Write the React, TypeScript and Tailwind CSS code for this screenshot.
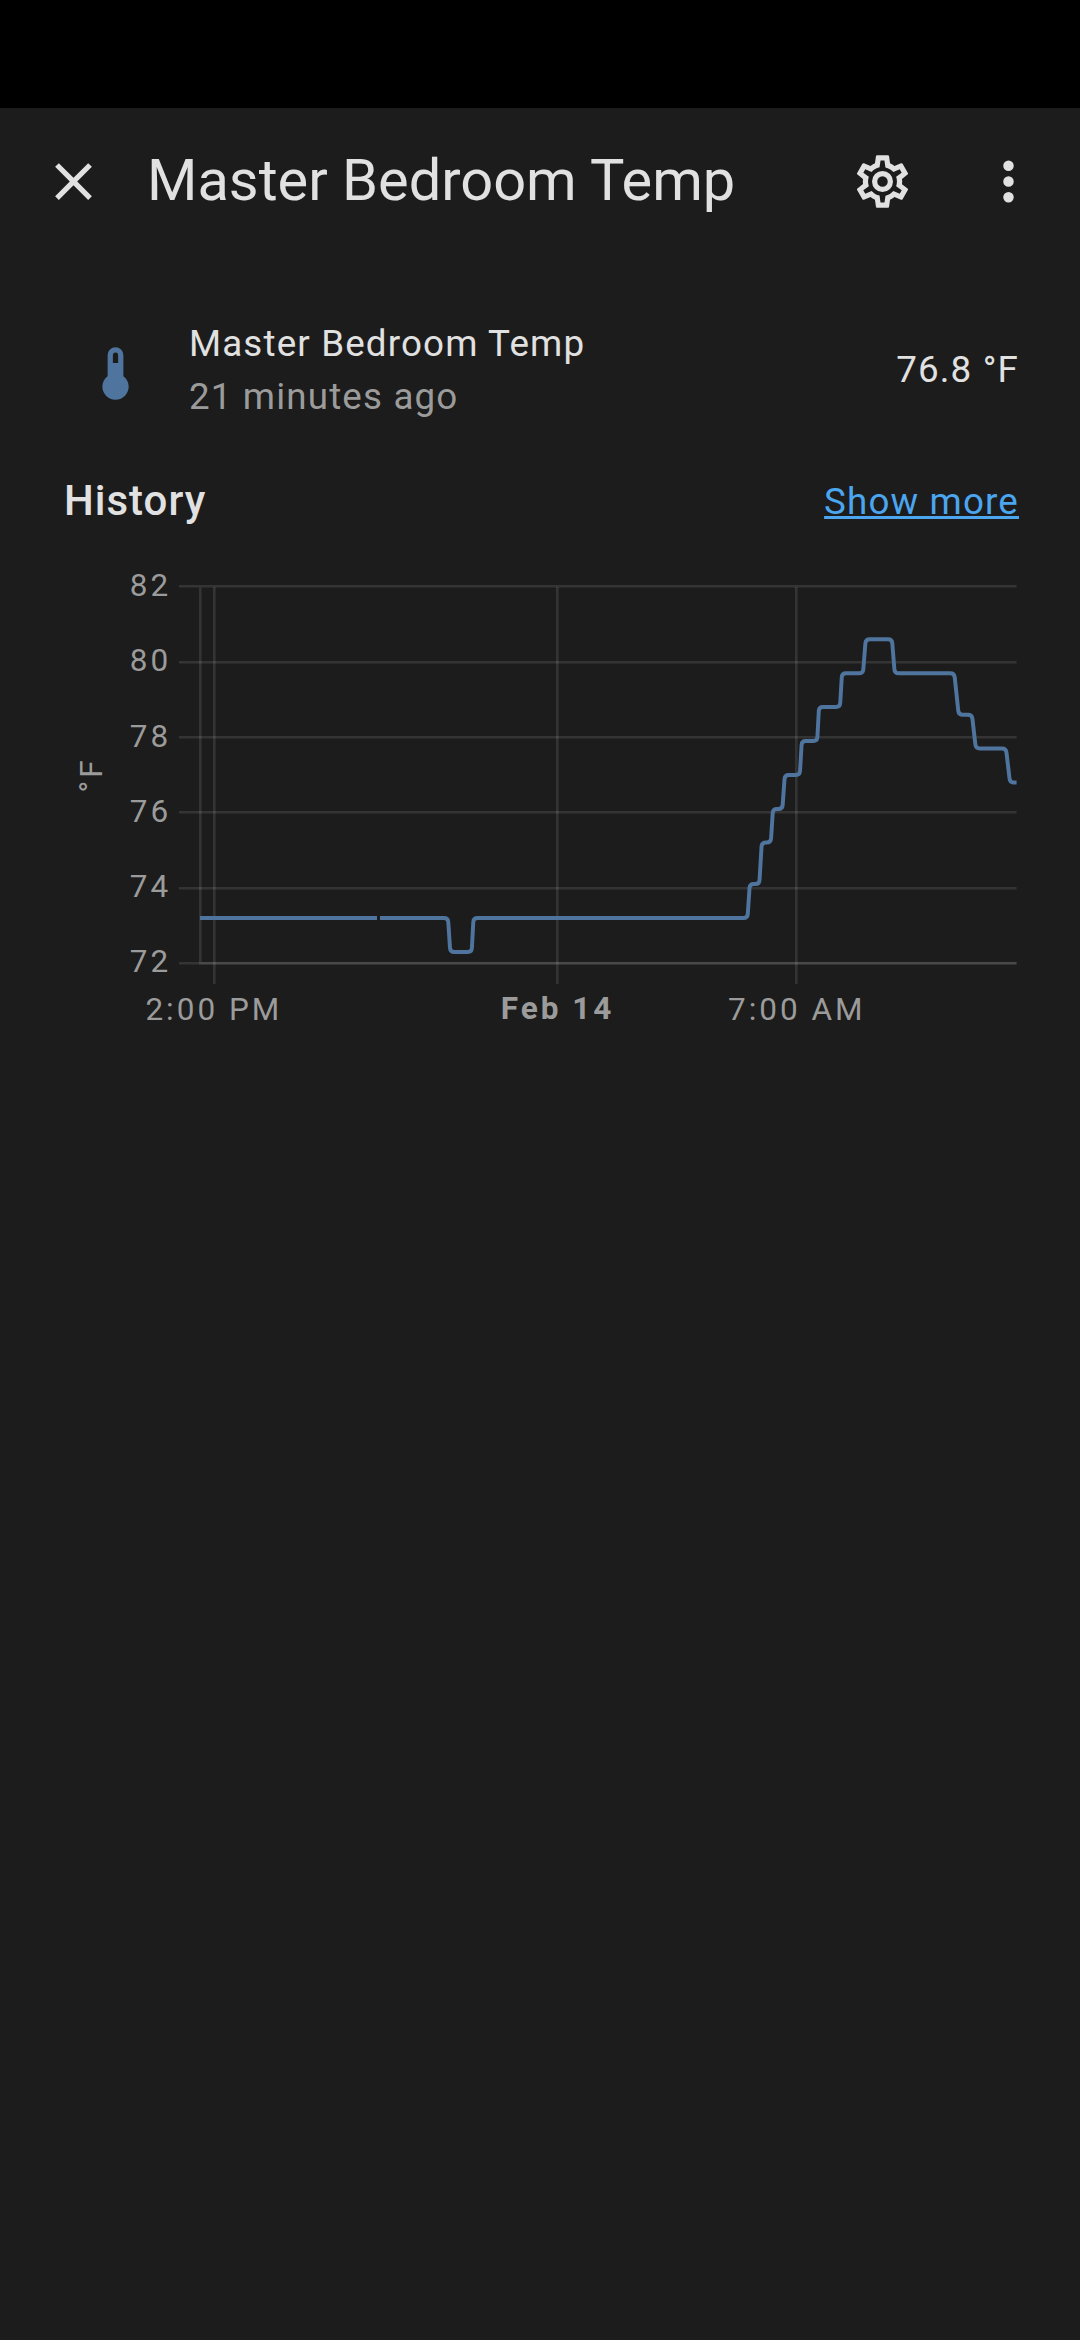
type Point = [number, number];

const ICONS = {
  close:
    "M19,6.41L17.59,5L12,10.59L6.41,5L5,6.41L10.59,12L5,17.59L6.41,19L12,13.41L17.59,19L19,17.59L13.41,12L19,6.41Z",
  cog: "M12,8A4,4 0 0,1 16,12A4,4 0 0,1 12,16A4,4 0 0,1 8,12A4,4 0 0,1 12,8M12,10A2,2 0 0,0 10,12A2,2 0 0,0 12,14A2,2 0 0,0 14,12A2,2 0 0,0 12,10M10,22C9.75,22 9.54,21.82 9.5,21.58L9.13,18.93C8.5,18.68 7.96,18.34 7.44,17.94L4.95,18.95C4.73,19.03 4.46,18.95 4.34,18.73L2.34,15.27C2.21,15.05 2.27,14.78 2.46,14.63L4.57,12.97L4.5,12L4.57,11L2.46,9.37C2.27,9.22 2.21,8.95 2.34,8.73L4.34,5.27C4.46,5.05 4.73,4.96 4.95,5.05L7.44,6.05C7.96,5.66 8.5,5.32 9.13,5.07L9.5,2.42C9.54,2.18 9.75,2 10,2H14C14.25,2 14.46,2.18 14.5,2.42L14.87,5.07C15.5,5.32 16.04,5.66 16.56,6.05L19.05,5.05C19.27,4.96 19.54,5.05 19.66,5.27L21.66,8.73C21.79,8.95 21.73,9.22 21.54,9.37L19.43,11L19.5,12L19.43,13L21.54,14.63C21.73,14.78 21.79,15.05 21.66,15.27L19.66,18.73C19.54,18.95 19.27,19.04 19.05,18.95L16.56,17.95C16.04,18.34 15.5,18.68 14.87,18.93L14.5,21.58C14.46,21.82 14.25,22 14,22H10M11.25,4L10.88,6.61C9.68,6.86 8.62,7.5 7.85,8.39L5.44,7.35L4.69,8.65L6.8,10.2C6.4,11.37 6.4,12.64 6.8,13.8L4.68,15.36L5.43,16.66L7.86,15.62C8.63,16.5 9.68,17.14 10.87,17.38L11.24,20H12.76L13.13,17.39C14.32,17.14 15.37,16.5 16.14,15.62L18.57,16.66L19.32,15.36L17.2,13.81C17.6,12.64 17.6,11.37 17.2,10.2L19.31,8.65L18.56,7.35L16.15,8.39C15.38,7.5 14.32,6.86 13.12,6.62L12.75,4H11.25Z",
  dots: "M12,16A2,2 0 0,1 14,18A2,2 0 0,1 12,20A2,2 0 0,1 10,18A2,2 0 0,1 12,16M12,10A2,2 0 0,1 14,12A2,2 0 0,1 12,14A2,2 0 0,1 10,12A2,2 0 0,1 12,10M12,4A2,2 0 0,1 14,6A2,2 0 0,1 12,8A2,2 0 0,1 10,6A2,2 0 0,1 12,4Z",
  thermometer:
    "M15 13V5A3 3 0 0 0 9 5V13A5 5 0 1 0 15 13M12 4A1 1 0 0 1 13 5V8H11V5A1 1 0 0 1 12 4Z",
};

function Icon({ path, className }: { path: string; className?: string }) {
  return (
    <svg viewBox="0 0 24 24" fill="currentColor" className={`size-[63px] shrink-0 ${className ?? ""}`}>
      <path d={path} />
    </svg>
  );
}

// Chart coordinates start 560px below the top of the screen.
const TOP = 560;
const yTicks = [
  { label: "82", y: 586.3, base: 596 },
  { label: "80", y: 662.3, base: 671 },
  { label: "78", y: 737.3, base: 747 },
  { label: "76", y: 812.3, base: 822 },
  { label: "74", y: 888.3, base: 897 },
  { label: "72", y: 963.3, base: 972 },
];
const xTicks = [214.3, 557.3, 796.3];

const before: Point[] = [[200, 918], [377, 918]];
const after: Point[] = [
  [380, 918], [448, 918], [450.3, 952], [471.7, 952], [473.5, 918],
  [747.5, 918], [749.8, 884], [759.3, 884], [761.8, 842.5], [770.8, 842.5],
  [773, 809], [782.4, 809], [784.8, 775], [799.8, 775], [801.8, 741],
  [817.2, 741], [819, 707], [840, 707], [842, 673.3], [863, 673.3],
  [865.7, 639.3], [892, 639.3], [894.7, 673.3], [954.3, 673.3], [958.7, 714.7],
  [972, 714.7], [975.8, 748.5], [1006, 748.5], [1010, 782.5], [1016.6, 782.5],
];

// Builds a polyline path whose corners are softened with short quadratic curves.
function roundedPath(points: Point[], radius: number) {
  const toward = (a: Point, b: Point): Point => {
    const len = Math.hypot(b[0] - a[0], b[1] - a[1]);
    const t = Math.min(radius, len / 2) / len;
    return [a[0] + (b[0] - a[0]) * t, a[1] + (b[1] - a[1]) * t];
  };
  let d = `M${points[0][0]},${points[0][1]}`;
  for (let i = 1; i < points.length - 1; i++) {
    const p = toward(points[i], points[i - 1]);
    const q = toward(points[i], points[i + 1]);
    d += `L${p[0]},${p[1]}Q${points[i][0]},${points[i][1]} ${q[0]},${q[1]}`;
  }
  const last = points[points.length - 1];
  return `${d}L${last[0]},${last[1]}`;
}

function HistoryChart() {
  return (
    <svg
      viewBox={`0 ${TOP} 1080 480`}
      className="block h-[480px] w-[1080px] fill-[#9b9b9b] text-[31.5px] tracking-[3px]"
    >
      <g fill="none" stroke="#e1e1e1" strokeOpacity="0.125" strokeWidth="2.625">
        {yTicks.map((t) => (
          <path key={t.label} d={`M179,${t.y}H1016.6`} />
        ))}
        <path d="M200.3,587.6V962" />
        {xTicks.map((x) => (
          <path key={x} d={`M${x},587V984`} />
        ))}
        <path d="M199,963.3H1016.6" />
      </g>
      <g fill="none" stroke="#4f759f" strokeWidth="3.94" strokeLinejoin="bevel">
        <path d={roundedPath(before, 4)} />
        <path d={roundedPath(after, 4)} />
      </g>
      {yTicks.map((t) => (
        <text key={t.label} x="129.7" y={t.base}>
          {t.label}
        </text>
      ))}
      <text x="145.4" y="1020">2:00 PM</text>
      <text x="500.7" y="1019" fontWeight="700">Feb 14</text>
      <text x="728" y="1020">7:00 AM</text>
      <text transform="translate(102 792.6) rotate(-90)">°F</text>
    </svg>
  );
}

export default function App() {
  return (
    <div className="flex h-[2340px] w-[1080px] flex-col overflow-hidden bg-[#1c1c1c] font-[Roboto,sans-serif] text-[#e1e1e1]">
      <div className="h-[108px] shrink-0 bg-black" />
      <header className="flex h-[147px] shrink-0 items-center pr-[40px] pl-[42px]">
        <Icon path={ICONS.close} />
        <h1 className="mb-[3px] ml-[42px] flex-1 text-[57.75px] leading-[76px] whitespace-nowrap">Master Bedroom Temp</h1>
        <Icon path={ICONS.cog} />
        <Icon path={ICONS.dots} className="ml-[63px]" />
      </header>
      <main className="flex flex-col">
        <section className="mt-[61px] flex h-[108px] items-center pr-[61px] pl-[84px] text-[36.75px] tracking-[1.15px]">
          <Icon path={ICONS.thermometer} className="mt-[7px] text-[#4f759f]" />
          <div className="ml-[42px] flex flex-1 flex-col leading-[53px]">
            <span>Master Bedroom Temp</span>
            <span className="text-[#9b9b9b]">21 minutes ago</span>
          </div>
          <span className="mb-[2px] leading-[53px]">76.8 °F</span>
        </section>
        <section className="mt-[47px] flex h-[60px] items-center justify-between pr-[61px] pl-[64px]">
          <h2 className="text-[42px] leading-[60px] font-medium tracking-[1px]">History</h2>
          <a className="mt-[2px] text-[36.75px] leading-[60px] tracking-[1.15px] text-[#4ba5ef] underline decoration-[3px] underline-offset-[2px]">
            Show more
          </a>
        </section>
        <div className="mt-[29px]">
          <HistoryChart />
        </div>
      </main>
    </div>
  );
}
